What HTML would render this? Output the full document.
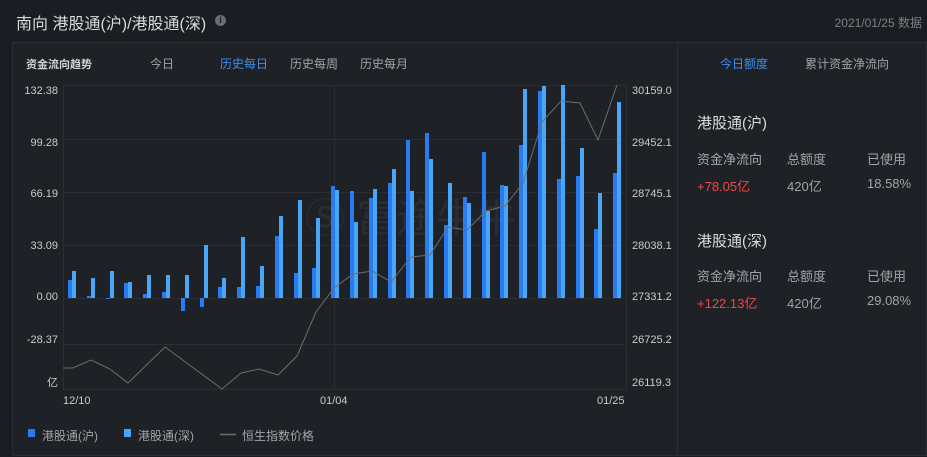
<!DOCTYPE html>
<html><head><meta charset="utf-8"><style>
*{margin:0;padding:0;box-sizing:border-box}
body{width:927px;height:457px;background:#1a1d21;font-family:"Liberation Sans","Noto Sans CJK SC",sans-serif;color:#a0a4a8;position:relative;overflow:hidden}
.a{position:absolute;white-space:nowrap}
</style></head><body>
<div class="a" style="left:16px;top:10px;font-size:16px;color:#d8dadc">南向 港股通(沪)/港股通(深)</div>
<div class="a" style="left:215px;top:15px;width:11px;height:11px;border-radius:50%;background:#6a6e73;color:#1a1d21;font-size:9px;font-weight:bold;text-align:center;line-height:11px">i</div>
<div class="a" style="right:5px;top:14px;font-size:12px;color:#7d8186">2021/01/25 数据</div>
<div class="a" style="left:12px;top:42px;width:915px;height:414px;background:#1e2226;border:1px solid #2b2f34"></div>
<div class="a" style="left:677px;top:42px;width:1px;height:414px;background:#2b2f34"></div>
<div class="a" style="left:26px;top:56px;font-size:11px;font-weight:bold;color:#d0d2d4">资金流向趋势</div>
<div class="a" style="left:150px;top:55px;font-size:12px">今日</div>
<div class="a" style="left:220px;top:55px;font-size:12px;color:#3d8ef0">历史每日</div>
<div class="a" style="left:290px;top:55px;font-size:12px">历史每周</div>
<div class="a" style="left:360px;top:55px;font-size:12px">历史每月</div>
<div class="a" style="left:720px;top:55px;font-size:12px;color:#3d8ef0">今日额度</div>
<div class="a" style="left:805px;top:55px;font-size:12px">累计资金净流向</div>

<div class="a" style="left:697px;top:112px;font-size:15px;color:#d8dadc">港股通(沪)</div>
<div class="a" style="left:697px;top:149px;font-size:13px">资金净流向</div>
<div class="a" style="left:787px;top:149px;font-size:13px">总额度</div>
<div class="a" style="left:867px;top:149px;font-size:13px">已使用</div>
<div class="a" style="left:697px;top:176px;font-size:13px;color:#f04848">+78.05亿</div>
<div class="a" style="left:787px;top:176px;font-size:13px">420亿</div>
<div class="a" style="left:867px;top:176px;font-size:13px">18.58%</div>
<div class="a" style="left:697px;top:230px;font-size:15px;color:#d8dadc">港股通(深)</div>
<div class="a" style="left:697px;top:266px;font-size:13px">资金净流向</div>
<div class="a" style="left:787px;top:266px;font-size:13px">总额度</div>
<div class="a" style="left:867px;top:266px;font-size:13px">已使用</div>
<div class="a" style="left:697px;top:293px;font-size:13px;color:#f04848">+122.13亿</div>
<div class="a" style="left:787px;top:293px;font-size:13px">420亿</div>
<div class="a" style="left:867px;top:293px;font-size:13px">29.08%</div>

<svg class="a" style="left:0;top:0" width="927" height="457">
<g stroke="#2b2f34" stroke-width="1">
<line x1="63" y1="85.5" x2="626" y2="85.5"/><line x1="63" y1="139.5" x2="626" y2="139.5"/><line x1="63" y1="192.5" x2="626" y2="192.5"/><line x1="63" y1="245.5" x2="626" y2="245.5"/><line x1="63" y1="298.5" x2="626" y2="298.5"/><line x1="63" y1="344.5" x2="626" y2="344.5"/><line x1="63" y1="389.5" x2="626" y2="389.5"/>
<line x1="63.5" y1="85" x2="63.5" y2="389"/><line x1="334.5" y1="85" x2="334.5" y2="389"/><line x1="626.5" y1="85" x2="626.5" y2="389"/>
</g>
<text x="305" y="232" font-size="40" fill="#2a2e32" font-family="Liberation Sans,Noto Sans CJK SC,sans-serif">Ⓢ 富途牛牛</text>
<g fill="#2b7bf0">
<rect x="68" y="280" width="4" height="18"/><rect x="87" y="296" width="4" height="2"/><rect x="106" y="298" width="4" height="1"/><rect x="124" y="283" width="4" height="15"/><rect x="143" y="294" width="4" height="4"/><rect x="162" y="292" width="4" height="6"/><rect x="181" y="298" width="4" height="13"/><rect x="200" y="298" width="4" height="9"/><rect x="218" y="287" width="4" height="11"/><rect x="237" y="287" width="4" height="11"/><rect x="256" y="286" width="4" height="12"/><rect x="275" y="236" width="4" height="62"/><rect x="294" y="273" width="4" height="25"/><rect x="312" y="268" width="4" height="30"/><rect x="331" y="186" width="4" height="112"/><rect x="350" y="191" width="4" height="107"/><rect x="369" y="198" width="4" height="100"/><rect x="388" y="183" width="4" height="115"/><rect x="406" y="140" width="4" height="158"/><rect x="425" y="133" width="4" height="165"/><rect x="444" y="225" width="4" height="73"/><rect x="463" y="197" width="4" height="101"/><rect x="482" y="152" width="4" height="146"/><rect x="500" y="185" width="4" height="113"/><rect x="519" y="145" width="4" height="153"/><rect x="538" y="91" width="4" height="207"/><rect x="557" y="179" width="4" height="119"/><rect x="576" y="176" width="4" height="122"/><rect x="594" y="229" width="4" height="69"/><rect x="613" y="173" width="4" height="125"/>
</g>
<g fill="#4aa6f5">
<rect x="72" y="271" width="4" height="27"/><rect x="91" y="278" width="4" height="20"/><rect x="110" y="271" width="4" height="27"/><rect x="128" y="282" width="4" height="16"/><rect x="147" y="275" width="4" height="23"/><rect x="166" y="275" width="4" height="23"/><rect x="185" y="275" width="4" height="23"/><rect x="204" y="245" width="4" height="53"/><rect x="222" y="278" width="4" height="20"/><rect x="241" y="237" width="4" height="61"/><rect x="260" y="266" width="4" height="32"/><rect x="279" y="216" width="4" height="82"/><rect x="298" y="200" width="4" height="98"/><rect x="316" y="218" width="4" height="80"/><rect x="335" y="190" width="4" height="108"/><rect x="354" y="222" width="4" height="76"/><rect x="373" y="189" width="4" height="109"/><rect x="392" y="169" width="4" height="129"/><rect x="410" y="191" width="4" height="107"/><rect x="429" y="159" width="4" height="139"/><rect x="448" y="183" width="4" height="115"/><rect x="467" y="203" width="4" height="95"/><rect x="486" y="211" width="4" height="87"/><rect x="504" y="186" width="4" height="112"/><rect x="523" y="89" width="4" height="209"/><rect x="542" y="86" width="4" height="212"/><rect x="561" y="85" width="4" height="213"/><rect x="580" y="148" width="4" height="150"/><rect x="598" y="193" width="4" height="105"/><rect x="617" y="102" width="4" height="196"/>
</g>
<polyline fill="none" stroke="#6a6d70" stroke-width="1" points="63,368 73,368 91,360 110,369 128,383 165,347 222,389 241,373 259,369 278,375 297,356 316,312 334,288 353,274 372,271 391,282 411,257 430,255 448,227 467,230 486,211 505,206 523,183 542,122 561,101 580,103 598,140 617,85"/>
<g font-size="11" fill="#c8cacc" font-family="Liberation Sans,sans-serif">
<text x="58" y="94" text-anchor="end">132.38</text><text x="58" y="146" text-anchor="end">99.28</text><text x="58" y="197" text-anchor="end">66.19</text><text x="58" y="249" text-anchor="end">33.09</text><text x="58" y="300" text-anchor="end">0.00</text><text x="58" y="343" text-anchor="end">-28.37</text><text x="58" y="386" text-anchor="end" font-family="Noto Sans CJK SC,sans-serif">亿</text>
<text x="632" y="94">30159.0</text><text x="632" y="146">29452.1</text><text x="632" y="197">28745.1</text><text x="632" y="249">28038.1</text><text x="632" y="300">27331.2</text><text x="632" y="343">26725.2</text><text x="632" y="386">26119.3</text>
<text x="63" y="404">12/10</text><text x="320" y="404">01/04</text><text x="597" y="404">01/25</text>
</g>
<rect x="28" y="429" width="7" height="8" fill="#2b7bf0"/>
<rect x="124" y="429" width="7" height="8" fill="#4aa6f5"/>
<line x1="220" y1="434.5" x2="236" y2="434.5" stroke="#6a6d70" stroke-width="1.5"/>
</svg>
<div class="a" style="left:42px;top:427px;font-size:12px">港股通(沪)</div>
<div class="a" style="left:138px;top:427px;font-size:12px">港股通(深)</div>
<div class="a" style="left:242px;top:427px;font-size:12px">恒生指数价格</div>
</body></html>
